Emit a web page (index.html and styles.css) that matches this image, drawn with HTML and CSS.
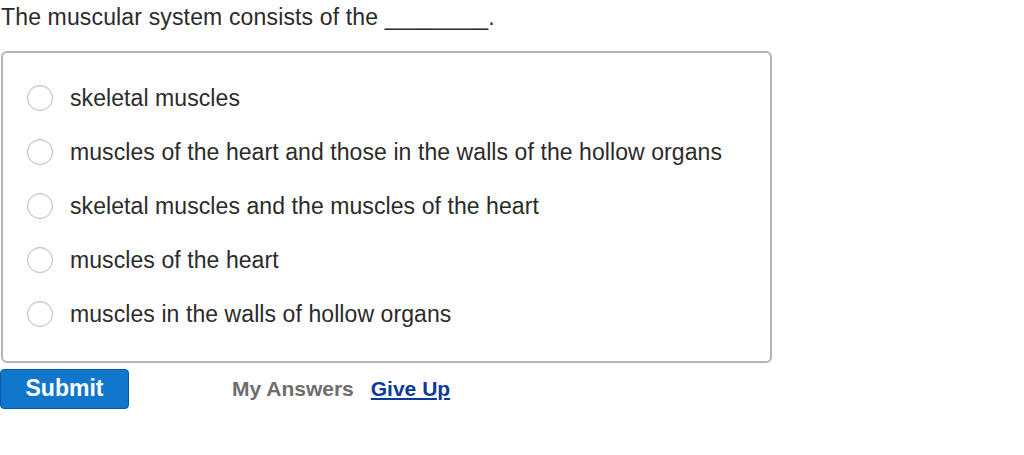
FILE: index.html
```html
<!DOCTYPE html>
<html lang="en">
<head>
	<meta charset="UTF-8">
	<title>Muscular system question</title>
	<link rel="stylesheet" href="styles.css">
</head>
<body>
	<div class="question">
		<p class="prompt">The muscular system consists of the ________.</p>
		<div class="choices">
			<label class="choice"><input type="radio" name="ans"><span>skeletal muscles</span></label>
			<label class="choice"><input type="radio" name="ans"><span>muscles of the heart and those in the walls of the hollow organs</span></label>
			<label class="choice"><input type="radio" name="ans"><span>skeletal muscles and the muscles of the heart</span></label>
			<label class="choice"><input type="radio" name="ans"><span>muscles of the heart</span></label>
			<label class="choice"><input type="radio" name="ans"><span>muscles in the walls of hollow organs</span></label>
		</div>
		<div class="actions">
			<button class="submit">Submit</button>
			<span class="my-answers">My Answers</span>
			<a class="give-up" href="#">Give Up</a>
		</div>
	</div>
</body>
</html>
```

FILE: styles.css
```css
*{
	padding: 0;
	margin: 0;
	box-sizing: border-box;
}
body{
	background: #fff;
	font-family: "Liberation Sans", Arial, sans-serif;
	color: #2b2b2b;
}
.question{
	width: 772px;
}
.prompt{
	font-size: 23px;
	line-height: 34px;
	padding-left: 1px;
	letter-spacing: 0.15px;
}
.choices{
	margin-top: 17px;
	margin-left: 1px;
	border: 2px solid #b4b4b4;
	border-radius: 6px;
	padding: 18px 0 20px 24px;
}
.choice{
	display: flex;
	align-items: center;
	height: 54px;
	font-size: 23px;
	letter-spacing: 0.08px;
	cursor: pointer;
}
.choice input{
	appearance: none;
	-webkit-appearance: none;
	width: 26px;
	height: 26px;
	border: 1px solid #b8b8b8;
	border-radius: 50%;
	background: #fff;
	box-shadow: inset 0 1px 1px rgba(0,0,0,0.05);
	margin-right: 17px;
	flex: none;
}
.actions{
	display: flex;
	align-items: center;
	margin-top: 6px;
}
.submit{
	width: 129px;
	height: 40px;
	background: #1177cc;
	border: 1px solid #0c5a99;
	border-radius: 4px;
	color: #fff;
	font: 700 23px "Liberation Sans", Arial, sans-serif;
	padding-bottom: 2px;
}
.my-answers{
	margin-left: 103px;
	font-size: 21px;
	font-weight: 700;
	color: #6d6d6d;
}
.give-up{
	margin-left: 17px;
	font-size: 21px;
	font-weight: 700;
	color: #0a3a9a;
	text-decoration: underline;
}
```
